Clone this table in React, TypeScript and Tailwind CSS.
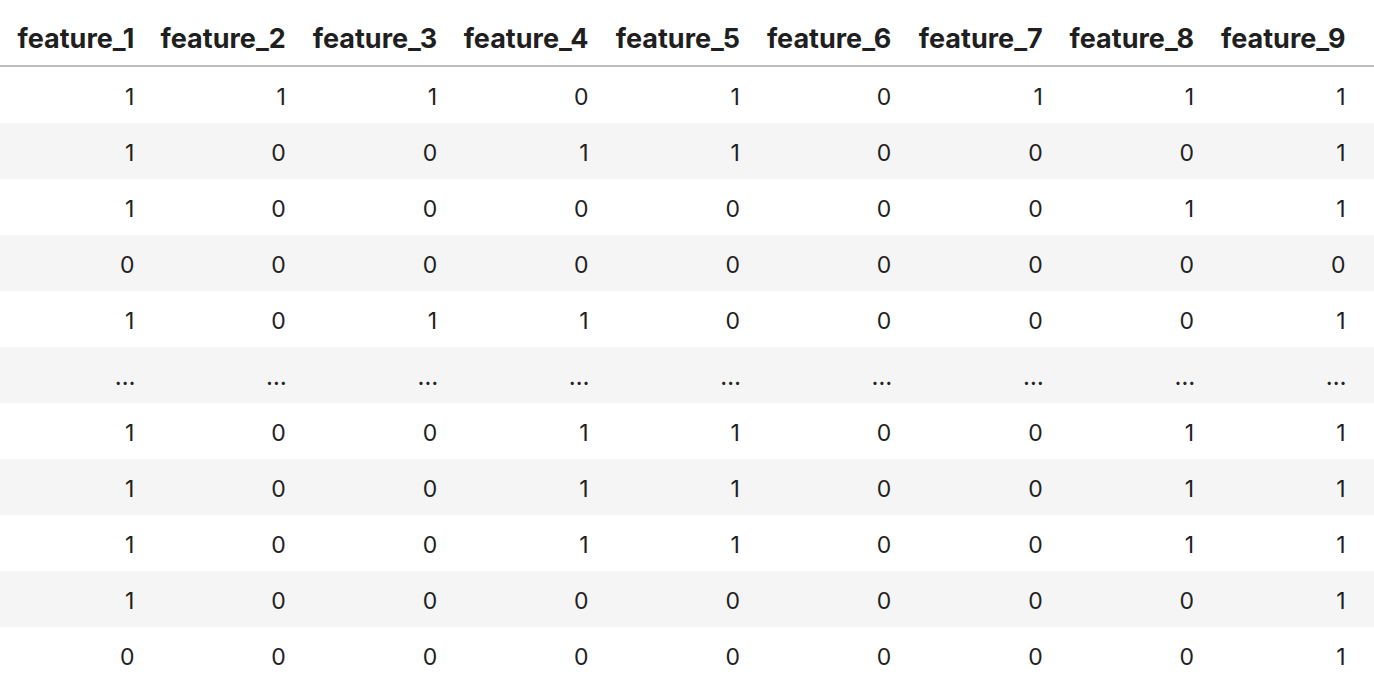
const headers = Array.from({ length: 9 }, (_, i) => `feature_${i + 1}`);

const rows: (number[] | null)[] = [
  [1, 1, 1, 0, 1, 0, 1, 1, 1],
  [1, 0, 0, 1, 1, 0, 0, 0, 1],
  [1, 0, 0, 0, 0, 0, 0, 1, 1],
  [0, 0, 0, 0, 0, 0, 0, 0, 0],
  [1, 0, 1, 1, 0, 0, 0, 0, 1],
  null,
  [1, 0, 0, 1, 1, 0, 0, 1, 1],
  [1, 0, 0, 1, 1, 0, 0, 1, 1],
  [1, 0, 0, 1, 1, 0, 0, 1, 1],
  [1, 0, 0, 0, 0, 0, 0, 0, 1],
  [0, 0, 0, 0, 0, 0, 0, 0, 1],
];

const grid = "grid grid-cols-[repeat(9,151.4px)]";

export default function App() {
  return (
    <div className="w-[1374px] h-[692px] bg-white text-[#1f1f1f] font-['Inter',sans-serif] overflow-hidden">
      {/* header */}
      <div className="h-[67px] border-b-2 border-[#bdbdbd]">
        <div className={`${grid} h-full items-center pt-[12px]`}>
          {headers.map((h) => (
            <div key={h} className="text-right pr-[17px] text-[27px] font-bold leading-none">
              {h}
            </div>
          ))}
        </div>
      </div>

      {/* body */}
      {rows.map((row, r) => (
        <div key={r} className={r % 2 === 1 ? "bg-[#f5f5f5]" : "bg-white"}>
          <div className={`${grid} h-[56px] items-center pt-[4px]`}>
            {row
              ? row.map((v, c) => (
                  <div key={c} className="text-right pr-[17px] text-[23px] leading-none">
                    {v}
                  </div>
                ))
              : headers.map((h) => (
                  <div key={h} className="text-right pr-[16px] text-[24px] leading-none text-[#222]">
                    …
                  </div>
                ))}
          </div>
        </div>
      ))}
    </div>
  );
}
